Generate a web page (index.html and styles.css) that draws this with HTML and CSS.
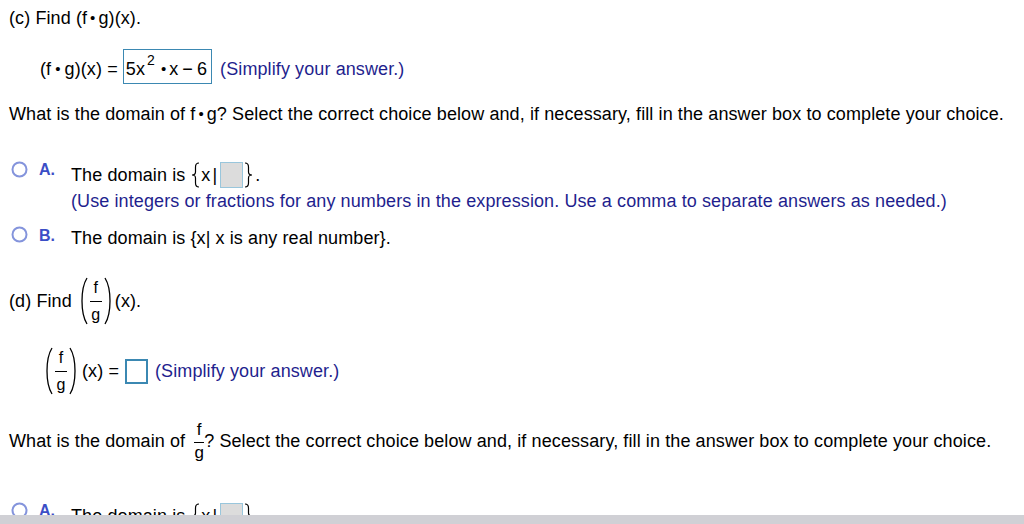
FILE: index.html
```html
<!DOCTYPE html>
<html lang="en">
<head>
    <meta charset="UTF-8">
    <title>Function Operations</title>
    <link rel="stylesheet" href="styles.css">
</head>
<body>

<div class="page">
    <div class="part">(c) Find (f<span class="dot">•</span>g)(x).</div>

    <div class="answer-row first">
        <span class="label">(f<span class="dot">•</span>g)(x) =</span>
        <span class="answer-box filled">5x<sup>2</sup><span class="dot">•</span>x<span class="minus">−</span>6</span>
        <span class="hint">(Simplify your answer.)</span>
    </div>

    <div class="question">What is the domain of f<span class="dot">•</span>g? Select the correct choice below and, if necessary, fill in the answer box to complete your choice.</div>

    <div class="choice choice-a">
        <svg class="radio" width="17" height="17" viewBox="0 0 17 17"><circle cx="8.5" cy="8.5" r="7" fill="#fff" stroke="#8494dc" stroke-width="2"/></svg>
        <span class="letter">A.</span>
        <div class="choice-body">
            <div class="choice-text tall">
                <span>The domain is</span>
                <svg class="brace left" width="9" height="26" viewBox="0 0 9 26"><path d="M8 1 C5 1 4.5 2.5 4.5 5 L4.5 10 C4.5 12 3.5 13 1 13 C3.5 13 4.5 14 4.5 16 L4.5 21 C4.5 23.5 5 25 8 25" fill="none" stroke="#000" stroke-width="1.2"/></svg>
                <span>x</span><span class="bar">|</span>
                <span class="blank"></span>
                <svg class="brace right" width="9" height="26" viewBox="0 0 9 26"><path d="M1 1 C4 1 4.5 2.5 4.5 5 L4.5 10 C4.5 12 5.5 13 8 13 C5.5 13 4.5 14 4.5 16 L4.5 21 C4.5 23.5 4 25 1 25" fill="none" stroke="#000" stroke-width="1.2"/></svg>
                <span>.</span>
            </div>
            <div class="hint note">(Use integers or fractions for any numbers in the expression. Use a comma to separate answers as needed.)</div>
        </div>
    </div>

    <div class="choice choice-b">
        <svg class="radio" width="17" height="17" viewBox="0 0 17 17"><circle cx="8.5" cy="8.5" r="7" fill="#fff" stroke="#8494dc" stroke-width="2"/></svg>
        <span class="letter">B.</span>
        <div class="choice-body">
            <div class="choice-text">The domain is {x| x is any real number}.</div>
        </div>
    </div>

    <div class="part part-d">
        <span>(d) Find</span>
        <span class="paren-frac">
            <svg class="paren" width="7" height="48" viewBox="0 0 7 48"><path d="M6 1 Q1 9 1 24 Q1 39 6 47" fill="none" stroke="#000" stroke-width="1.3"/></svg>
            <span class="frac"><span class="num">f</span><span class="den">g</span></span>
            <svg class="paren" width="7" height="48" viewBox="0 0 7 48"><path d="M1 1 Q6 9 6 24 Q6 39 1 47" fill="none" stroke="#000" stroke-width="1.3"/></svg>
        </span>
        <span>(x).</span>
    </div>

    <div class="answer-row second">
        <span class="paren-frac">
            <svg class="paren" width="7" height="48" viewBox="0 0 7 48"><path d="M6 1 Q1 9 1 24 Q1 39 6 47" fill="none" stroke="#000" stroke-width="1.3"/></svg>
            <span class="frac"><span class="num">f</span><span class="den">g</span></span>
            <svg class="paren" width="7" height="48" viewBox="0 0 7 48"><path d="M1 1 Q6 9 6 24 Q6 39 1 47" fill="none" stroke="#000" stroke-width="1.3"/></svg>
        </span>
        <span class="label">(x) =</span>
        <span class="answer-box empty"></span>
        <span class="hint">(Simplify your answer.)</span>
    </div>

    <div class="question question-d">
        <span>What is the domain of</span>
        <span class="frac inline"><span class="num">f</span><span class="den">g</span></span>
        <span>? Select the correct choice below and, if necessary, fill in the answer box to complete your choice.</span>
    </div>

    <div class="choice choice-a choice-cut">
        <svg class="radio" width="17" height="17" viewBox="0 0 17 17"><circle cx="8.5" cy="8.5" r="7" fill="#fff" stroke="#8494dc" stroke-width="2"/></svg>
        <span class="letter">A.</span>
        <div class="choice-body">
            <div class="choice-text tall">
                <span>The domain is</span>
                <svg class="brace left" width="9" height="26" viewBox="0 0 9 26"><path d="M8 1 C5 1 4.5 2.5 4.5 5 L4.5 10 C4.5 12 3.5 13 1 13 C3.5 13 4.5 14 4.5 16 L4.5 21 C4.5 23.5 5 25 8 25" fill="none" stroke="#000" stroke-width="1.2"/></svg>
                <span>x</span><span class="bar">|</span>
                <span class="blank"></span>
                <svg class="brace right" width="9" height="26" viewBox="0 0 9 26"><path d="M1 1 C4 1 4.5 2.5 4.5 5 L4.5 10 C4.5 12 5.5 13 8 13 C5.5 13 4.5 14 4.5 16 L4.5 21 C4.5 23.5 4 25 1 25" fill="none" stroke="#000" stroke-width="1.2"/></svg>
                <span>.</span>
            </div>
        </div>
    </div>
</div>

<div class="footer-bar"></div>

</body>
</html>
```

FILE: styles.css
```css
body {
    margin: 0;
    font-family: "Liberation Sans", Arial, sans-serif;
    font-size: 18px;
    line-height: 21px;
    letter-spacing: 0.1px;
    color: #000;
    background-color: #fff;
}

.page {
    padding: 8px 0 0 9px;
    height: 507px;
    overflow: hidden;
}

.dot {
    font-size: 15px;
    margin: 0 3px;
    position: relative;
    top: -1px;
}

.part {
    height: 21px;
}

.answer-row {
    display: flex;
}

.answer-row.first {
    align-items: baseline;
    margin-top: 20px;
    height: 35px;
    padding-left: 31px;
}

.answer-row.first .label .dot {
    margin: 0 4px;
}

.answer-box {
    display: inline-block;
    border: 1px solid #3b88b2;
    box-sizing: border-box;
}

.answer-box.filled {
    height: 35px;
    padding: 9px 4px 4px 2px;
    margin: 0 8px 0 5px;
}

.answer-box.filled sup {
    font-size: 14px;
    vertical-align: baseline;
    position: relative;
    top: -10px;
    margin: 0 2px 0 2px;
}

.answer-box.filled .dot {
    margin: 0 3px 0 4px;
}

.minus {
    margin: 0 4px;
}

.answer-box.empty {
    width: 23px;
    height: 25px;
    border-width: 2px;
    margin: 0 7px 0 6px;
}

.hint {
    color: #1f1f8e;
}

.question {
    margin-top: 20px;
    height: 21px;
}

.choice {
    display: flex;
    align-items: flex-start;
    padding-left: 2px;
}

.choice-a {
    margin-top: 35px;
}

.choice-a .radio {
    margin-top: 1px;
}

.choice-b {
    margin-top: 16px;
}

.choice-b .radio {
    margin-top: -2px;
}

.letter {
    color: #3b4ec6;
    font-weight: bold;
    font-size: 16px;
    line-height: 18px;
    width: 32px;
    margin-left: 11px;
    letter-spacing: 0;
}

.choice-a .letter {
    margin-top: 1px;
}

.choice-b .letter {
    margin-top: -1px;
}

.choice-body {
    display: flex;
    flex-direction: column;
}

.choice-text {
    display: flex;
    align-items: center;
    height: 21px;
    white-space: pre;
}

.choice-text.tall {
    height: 30px;
}

.brace.left {
    margin: 0 1px 0 6px;
}

.brace.right {
    margin: 0 2px 0 1px;
}

.bar {
    margin: 0 3px 0 2px;
}

.blank {
    display: inline-block;
    width: 23px;
    height: 26px;
    box-sizing: border-box;
    background-color: #dcdcdc;
    border: 1px solid #99c6dc;
}

.note {
    margin-top: 1px;
}

.part-d {
    display: flex;
    align-items: center;
    margin-top: 27px;
    height: 50px;
}

.paren-frac {
    display: inline-flex;
    align-items: center;
    margin: 0 4px 0 9px;
}

.paren {
    display: block;
}

.frac {
    display: inline-flex;
    flex-direction: column;
    align-items: center;
    padding: 0 2px;
    font-size: 16px;
    line-height: 20px;
}

.frac .num {
    border-bottom: 1px solid #000;
    padding: 0 1px 3px;
    min-width: 10px;
    text-align: center;
}

.frac .den {
    padding-top: 3px;
}

.answer-row.second {
    align-items: center;
    margin-top: 21px;
    height: 48px;
    padding-left: 37px;
}

.answer-row.second .paren-frac {
    margin: 0 6px 0 0;
}

.question-d {
    display: flex;
    align-items: center;
    margin-top: 23px;
    height: 46px;
}

.frac.inline {
    font-size: 17px;
    margin: 0 0 0 9px;
    padding: 0;
}

.frac.inline .num {
    line-height: 22px;
    padding: 0 0 1px;
}

.frac.inline .den {
    padding-top: 0;
}

.choice-cut {
    margin-top: 37px;
}

.footer-bar {
    height: 9px;
    background-color: #d0d0d5;
}
```
